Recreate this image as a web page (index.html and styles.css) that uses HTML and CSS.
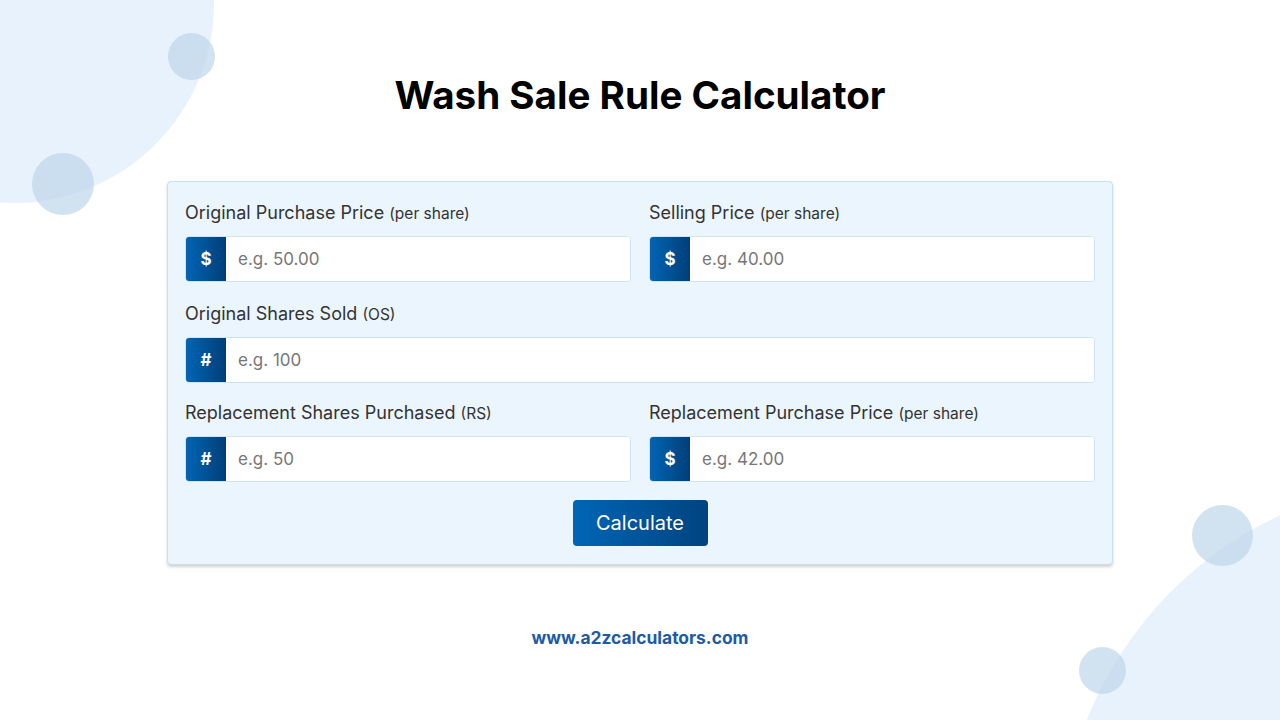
FILE: index.html
```html
<!doctype html>
<html lang="en">
<head>
	<meta charset="UTF-8">
	<title>Wash Sale Rule Calculator</title>
	<link rel="stylesheet" href="styles.css">
</head>
<body>
	<div class="bg">
		<span class="blob blob-tl"></span>
		<span class="dot dot-1"></span>
		<span class="dot dot-2"></span>
		<span class="blob blob-br"></span>
		<span class="dot dot-3"></span>
		<span class="dot dot-4"></span>
	</div>
	<div class="page">
		<h1 class="title">Wash Sale Rule Calculator</h1>
		<div class="calc">
			<div class="row">
				<div class="field">
					<label>Original Purchase Price <small>(per share)</small></label>
					<div class="group"><span class="pre">$</span><input type="text" placeholder="e.g. 50.00"></div>
				</div>
				<div class="field">
					<label>Selling Price <small>(per share)</small></label>
					<div class="group"><span class="pre">$</span><input type="text" placeholder="e.g. 40.00"></div>
				</div>
			</div>
			<div class="row">
				<div class="field">
					<label>Original Shares Sold <small>(OS)</small></label>
					<div class="group"><span class="pre">#</span><input type="text" placeholder="e.g. 100"></div>
				</div>
			</div>
			<div class="row row-last">
				<div class="field">
					<label>Replacement Shares Purchased <small>(RS)</small></label>
					<div class="group"><span class="pre">#</span><input type="text" placeholder="e.g. 50"></div>
				</div>
				<div class="field">
					<label>Replacement Purchase Price <small>(per share)</small></label>
					<div class="group"><span class="pre">$</span><input type="text" placeholder="e.g. 42.00"></div>
				</div>
			</div>
			<div class="actions">
				<a href="javascript:;" class="btn">Calculate</a>
			</div>
		</div>
		<div class="site">www.a2zcalculators.com</div>
	</div>
</body>
</html>
```

FILE: styles.css
```css
body,h1,div,label,input{
	margin:0;
	padding:0;
}
body{
	background:#fff;
	font-family:Inter,"Liberation Sans",Arial,sans-serif;
	color:#333;
	height:720px;
	overflow:hidden;
	position:relative;
}
a{
	text-decoration:none;
}
/* decorative shapes */
.bg{
	position:absolute;
	left:0;
	top:0;
	width:1280px;
	height:720px;
	overflow:hidden;
}
.bg span{
	position:absolute;
	border-radius:50%;
}
.blob{
	background:#e8f2fc;
}
.blob-tl{
	left:-186px;
	top:-197px;
	width:400px;
	height:400px;
}
.blob-br{
	left:1060px;
	top:480px;
	width:760px;
	height:760px;
}
.dot{
	background:rgba(190,213,234,0.7);
}
.dot-1{
	left:168px;
	top:33px;
	width:47px;
	height:47px;
}
.dot-2{
	left:32px;
	top:153px;
	width:62px;
	height:62px;
}
.dot-3{
	left:1192px;
	top:505px;
	width:61px;
	height:61px;
}
.dot-4{
	left:1079px;
	top:647px;
	width:47px;
	height:47px;
}
.page{
	position:relative;
	display:flex;
	flex-direction:column;
	align-items:center;
}
.title{
	margin-top:71px;
	font:700 38.6px/48px Inter,"Liberation Sans",sans-serif;
	color:#000;
}
.calc{
	margin-top:62px;
	width:946px;
	box-sizing:border-box;
	background:#ebf5fe;
	border:1px solid #c7e0f4;
	border-radius:4px;
	box-shadow:0 2px 3px rgba(0,0,0,0.18);
	padding:19px 17px 18px;
	display:flex;
	flex-direction:column;
	gap:20px;
}
.row{
	display:flex;
	gap:18px;
}
.row-last{
	margin-top:-2px;
}
.field{
	flex:1;
	display:flex;
	flex-direction:column;
	gap:11px;
}
.field label{
	display:block;
	height:24px;
	font-size:18px;
	line-height:24px;
	color:#333;
}
.field label small{
	font-size:15.5px;
	line-height:1;
}
.group{
	display:flex;
	height:46px;
	border:1px solid #cde3f6;
	border-radius:4px;
	background:#fff;
	overflow:hidden;
	box-sizing:border-box;
}
.pre{
	width:40px;
	display:flex;
	align-items:center;
	justify-content:center;
	background:linear-gradient(to right,#0064b4,#003f78);
	color:#fff;
	font-weight:700;
	font-size:17px;
}
.group input{
	flex:1;
	border:0;
	outline:none;
	padding:0 12px;
	font:17px Inter,"Liberation Sans",sans-serif;
	color:#333;
	background:#fff;
}
.group input::placeholder{
	color:#777;
}
.actions{
	display:flex;
	justify-content:center;
	margin-top:-2px;
}
.btn{
	display:block;
	width:135px;
	height:46px;
	line-height:46px;
	text-align:center;
	border-radius:4px;
	background:linear-gradient(to right,#0066b6,#00437f);
	color:#fff;
	font-size:20px;
}
.site{
	margin-top:62px;
	font:700 17.4px/22px Inter,"Liberation Sans",sans-serif;
	color:#1d5ba6;
}
```
